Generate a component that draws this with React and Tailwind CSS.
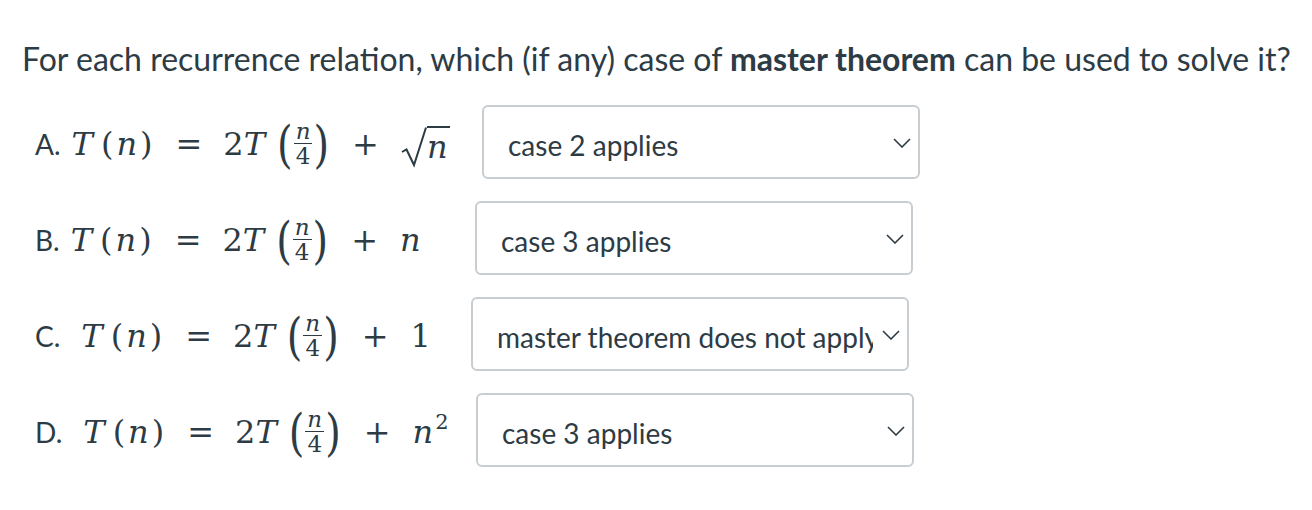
const ink = "text-[#2d3b45]";

function Frac() {
  return (
    <span className="mx-[1px] inline-flex flex-col items-center text-[23px] leading-[22px]">
      <span className="px-[2px] italic">n</span>
      <span className="my-[1px] h-[1.5px] w-full bg-[#2d3b45]" />
      <span className="px-[2px]">4</span>
    </span>
  );
}

function Paren({ children, big }) {
  const cls = big ? "text-[40px] leading-none font-light scale-y-[1.25]" : "text-[32px] leading-none";
  return (
    <span className="inline-flex items-center">
      <span className={cls}>(</span>
      {children}
      <span className={cls}>)</span>
    </span>
  );
}

function Sqrt() {
  return (
    <span className="inline-flex items-end">
      <svg width="26" height="42" viewBox="0 0 26 42" className="mb-[-6px]">
        <path d="M1 26 L5.5 23.5 L13 39 L25 1.5" fill="none" stroke="#2d3b45" strokeWidth="2" />
      </svg>
      <span className="border-t-2 border-[#2d3b45] pt-[4px] pr-[3px] italic leading-[30px]">n</span>
    </span>
  );
}

function Lhs() {
  return (
    <>
      <span className="italic">T</span>
      <span className="ml-[8px]">
        <Paren>
          <span className="italic px-[3px]">n</span>
        </Paren>
      </span>
      <span className="ml-[23px] mr-[21px]">=</span>
      <span>2</span>
      <span className="italic">T</span>
      <span className="ml-[12px]">
        <Paren big>
          <Frac />
        </Paren>
      </span>
      <span className="ml-[23px] mr-[22px]">+</span>
    </>
  );
}

const ROWS = [
  { label: "A.", gap: "ml-[11px]", width: "w-[447px]", rhs: <Sqrt />, value: "case 2 applies" },
  { label: "B.", gap: "ml-[11px]", width: "w-[440px]", rhs: <span className="italic">n</span>, value: "case 3 applies" },
  { label: "C.", gap: "ml-[21px]", width: "w-[436px]", rhs: <span>1</span>, value: "master theorem does not apply" },
  {
    label: "D.",
    gap: "ml-[21px]",
    width: "w-[441px]",
    rhs: (
      <span className="italic">
        n<sup className="not-italic text-[21px] ml-[2px] top-[-14px]">2</sup>
      </span>
    ),
    value: "case 3 applies",
  },
];

function Select({ value }) {
  return (
    <div className="relative flex h-[74px] w-[438px] items-center rounded-[6px] border-2 border-[#c7cdd1] bg-white pl-[24px] pr-[28px]">
      <span className="block max-w-[376px] overflow-hidden whitespace-nowrap text-[28px] leading-[36px] pt-[5px]">{value}</span>
      <svg width="18" height="10" viewBox="0 0 18 10" className="absolute right-[7px] top-[31px]">
        <path d="M1 1 L9 9 L17 1" fill="none" stroke="#2d3b45" strokeWidth="1.6" />
      </svg>
    </div>
  );
}

export default function App() {
  return (
    <div className={`h-[510px] w-[1312px] bg-white ${ink}`} style={{ fontFamily: "Lato, 'Liberation Sans', sans-serif" }}>
      <p className="pl-[22px] pt-[37px] text-[32px] leading-[44px]">
        For each recurrence relation, which (if any) case of <b className="font-bold">master theorem</b> can be used to solve it?
      </p>
      <div className="mt-[24px] flex flex-col gap-[22px] pl-[35px]">
        {ROWS.map((r) => (
          <div key={r.label} className="flex h-[74px] items-center">
            <div className={`${r.width} flex items-center pt-[3px]`}>
              <span className="text-[28px]">{r.label}</span>
              <span
                className={`${r.gap} inline-flex items-center text-[32px] leading-none`}
                style={{ fontFamily: "'DejaVu Serif', 'Liberation Serif', serif" }}
              >
                <Lhs />
                {r.rhs}
              </span>
            </div>
            <Select value={r.value} />
          </div>
        ))}
      </div>
    </div>
  );
}
